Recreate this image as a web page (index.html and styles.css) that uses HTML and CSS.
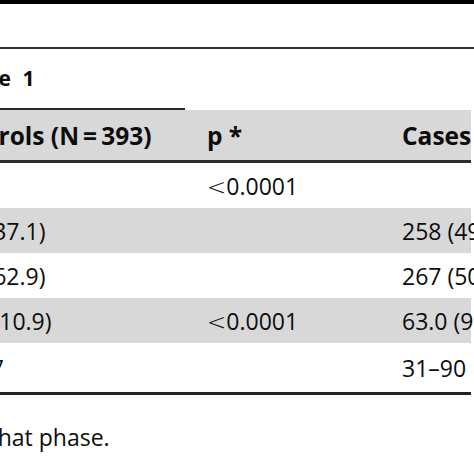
FILE: index.html
```html
<!DOCTYPE html>
<html lang="en">
<head>
    <meta charset="UTF-8">
    <meta name="viewport" content="width=device-width, initial-scale=1.0">
    <title>Table 1</title>
    <link rel="stylesheet" href="styles.css">
</head>
<body>
    <div class="page">
        <div class="top-rule"></div>
        <div class="sheet">
            <div class="caption">Table 1</div>
            <table class="data">
                <thead>
                    <tr>
                        <th class="col-controls">Controls (N&#8201;=&#8201;393)</th>
                        <th class="col-p">p *</th>
                        <th class="col-cases">Cases (N&#8201;=&#8201;525)</th>
                    </tr>
                </thead>
                <tbody>
                    <tr>
                        <td></td>
                        <td><span class="lt">&lt;</span>0.0001</td>
                        <td></td>
                    </tr>
                    <tr class="shade">
                        <td>146 (37.1)</td>
                        <td></td>
                        <td>258 (49.1)</td>
                    </tr>
                    <tr>
                        <td>247 (62.9)</td>
                        <td></td>
                        <td>267 (50.9)</td>
                    </tr>
                    <tr class="shade">
                        <td>58.0 (10.9)</td>
                        <td><span class="lt">&lt;</span>0.0001</td>
                        <td>63.0 (9.8)</td>
                    </tr>
                    <tr class="last">
                        <td class="range">25&ndash;87</td>
                        <td></td>
                        <td>31&ndash;90</td>
                    </tr>
                </tbody>
            </table>
            <p class="note">* in that phase.</p>
        </div>
    </div>
</body>
</html>
```

FILE: styles.css
```css
body {
    margin: 0;
    background: #fff;
    font-family: "Open Sans", "DejaVu Sans", sans-serif;
    color: #0d0d0d;
}

.page {
    width: 474px;
    height: 474px;
    overflow: hidden;
}

.top-rule {
    height: 4px;
    background: #000;
    margin-bottom: 43px;
}

.sheet {
    margin-left: -59px;
    border-top: 2px solid #333;
}

.caption {
    width: 231px;
    height: 59px;
    padding-left: 13px;
    line-height: 59px;
    font-size: 21px;
    font-weight: bold;
    word-spacing: 6px;
    border-bottom: 2px solid #2b2b2b;
}

.data {
    width: 530px;
    table-layout: fixed;
    border-collapse: collapse;
    font-size: 23px;
}

.data th,
.data td {
    padding: 0;
    text-align: left;
    white-space: nowrap;
    overflow: visible;
    height: 45px;
}

.data th {
    height: 50px;
    background: #d8d8d8;
    font-size: 24.5px;
    font-weight: bold;
    border-bottom: 3px solid #2b2b2b;
}

.col-controls { width: 266px; }
.col-p { width: 195px; }
.col-cases { width: 69px; }

.data tr.shade td {
    background: #d8d8d8;
}

.data tr.last td {
    height: 49px;
    border-bottom: 3px solid #222;
}

.data td.range {
    letter-spacing: -0.3px;
}

.lt {
    font-family: "DejaVu Sans", sans-serif;
    font-weight: 200;
}

.note {
    margin: 0;
    padding-top: 26px;
    padding-left: 4px;
    font-size: 23px;
}
```
